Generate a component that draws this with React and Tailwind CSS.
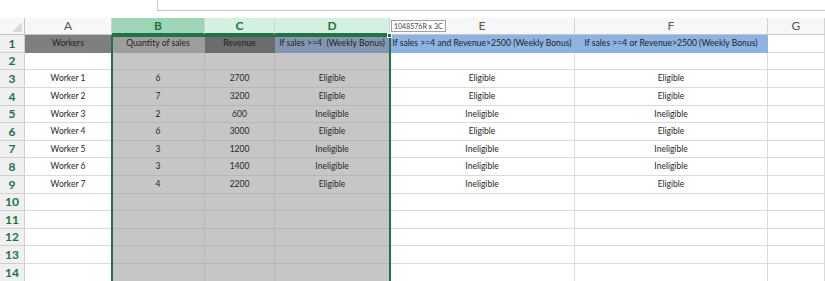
const COLS = [
  { key: 'A', w: 'w-[87px]' },
  { key: 'B', w: 'w-[93px]' },
  { key: 'C', w: 'w-[70px]' },
  { key: 'D', w: 'w-[115px]' },
  { key: 'E', w: 'w-[185px]' },
  { key: 'F', w: 'w-[193px]' },
  { key: 'G', w: 'w-[57px]' },
];

const ROW_H = ['h-[18px]', 'h-[17px]', 'h-[18px]', 'h-[18px]', 'h-[17px]', 'h-[18px]', 'h-[17px]', 'h-[18px]', 'h-[18px]', 'h-[17px]', 'h-[18px]', 'h-[17px]', 'h-[18px]', 'h-[18px]'];

const DATA = [
  ['Worker 1', '6', '2700', 'Eligible', 'Eligible', 'Eligible'],
  ['Worker 2', '7', '3200', 'Eligible', 'Eligible', 'Eligible'],
  ['Worker 3', '2', '600', 'Ineligible', 'Ineligible', 'Ineligible'],
  ['Worker 4', '6', '3000', 'Eligible', 'Eligible', 'Eligible'],
  ['Worker 5', '3', '1200', 'Ineligible', 'Ineligible', 'Ineligible'],
  ['Worker 6', '3', '1400', 'Ineligible', 'Ineligible', 'Ineligible'],
  ['Worker 7', '4', '2200', 'Eligible', 'Ineligible', 'Eligible'],
];

const HEAD = [
  { text: 'Workers', bg: 'bg-[#7f7f7f]' },
  { text: 'Quantity of sales', bg: 'bg-[#9d9d9d]' },
  { text: 'Revenue', bg: 'bg-[#6c6c6c]' },
  { text: 'If sales >=4  (Weekly Bonus)', bg: 'bg-[#8497b2]' },
  { text: 'If sales >=4 and Revenue>2500 (Weekly Bonus)', bg: 'bg-[#8db3e2]' },
  { text: 'If sales >=4 or Revenue>2500 (Weekly Bonus)', bg: 'bg-[#8db3e2]' },
  { text: '', bg: 'bg-white' },
];

// B:D are the selected columns
const isSel = (i) => i >= 1 && i <= 3;

function ColHeader({ col, i }) {
  const sel = isSel(i);
  const bg = i === 1 ? 'bg-[#9fd5b7]' : sel ? 'bg-[#d3f0e0]' : 'bg-[#f7f7f7]';
  return (
    <div
      className={`${col.w} h-[17px] flex items-center justify-center border-r border-[#d4d4d4] ${bg} ${
        sel ? 'text-[#217346] font-bold border-b-2 border-b-[#217346]' : 'text-[#555] border-b border-b-[#c6c6c6]'
      } text-[12px]`}
    >
      {col.key}
    </div>
  );
}

export default function App() {
  const rows = Array.from({ length: 14 }, (_, r) => r + 1);
  return (
    <div className="w-[825px] h-[281px] overflow-hidden bg-white text-[#262626]" style={{ fontFamily: 'Lato, "Liberation Sans", sans-serif' }}>
      {/* formula bar remnant */}
      <div className="h-[18px] flex">
        <div className="w-[157px]" />
        <div className="flex-1 h-[11px] border-l border-b border-[#c6c6c6]" />
      </div>

      <div className="relative">
        {/* column headers */}
        <div className="flex">
          <div className="w-[25px] h-[17px] bg-[#f7f7f7] border-r border-b border-[#c6c6c6] flex items-end justify-end p-[2px]">
            <div className="w-0 h-0 border-l-[10px] border-l-transparent border-b-[10px] border-b-[#dadada]" />
          </div>
          {COLS.map((c, i) => (
            <ColHeader key={c.key} col={c} i={i} />
          ))}
        </div>

        {rows.map((r, ri) => {
          const h = ROW_H[ri];
          const d = r >= 3 && r <= 9 ? DATA[r - 3] : null;
          return (
            <div key={r} className="flex">
              <div className={`w-[25px] ${h} flex items-center justify-center bg-[#f0f0f0] border-r border-b border-[#d0d0d0] text-[#217346] font-bold text-[12px]`}>
                {r}
              </div>
              {COLS.map((c, i) => {
                let bg = isSel(i) ? 'bg-[#c6c6c6]' : 'bg-white';
                let text = '';
                let grid = isSel(i) ? 'border-[#b7b7b7]' : 'border-[#dadada]';
                if (r === 1) {
                  bg = HEAD[i].bg;
                  text = HEAD[i].text;
                  grid = HEAD[i].text ? 'border-transparent' : 'border-[#dadada]';
                } else if (d && i < 6) {
                  text = d[i];
                }
                return (
                  <div
                    key={c.key}
                    className={`${c.w} ${h} ${bg} border-r border-b ${grid} flex items-center justify-center whitespace-pre overflow-hidden ${
                      r === 1 ? 'text-[#1f1f1f] text-[8.6px]' : 'text-[8.5px]'
                    }`}
                  >
                    {text}
                  </div>
                );
              })}
            </div>
          );
        })}

        {/* selection outline over B:D */}
        <div className="absolute left-[111px] top-[17px] w-[280px] h-[300px] border-2 border-[#217346] pointer-events-none" />
        <div className="absolute left-[387px] top-[15px] w-[5px] h-[5px] bg-[#217346] border border-white" />

        {/* size tooltip */}
        <div className="absolute left-[391px] top-[2px] h-[12px] px-[2px] flex items-center bg-white border border-[#a0a0a0] text-[7px] text-[#444]">
          1048576R x 3C
        </div>
      </div>
    </div>
  );
}
